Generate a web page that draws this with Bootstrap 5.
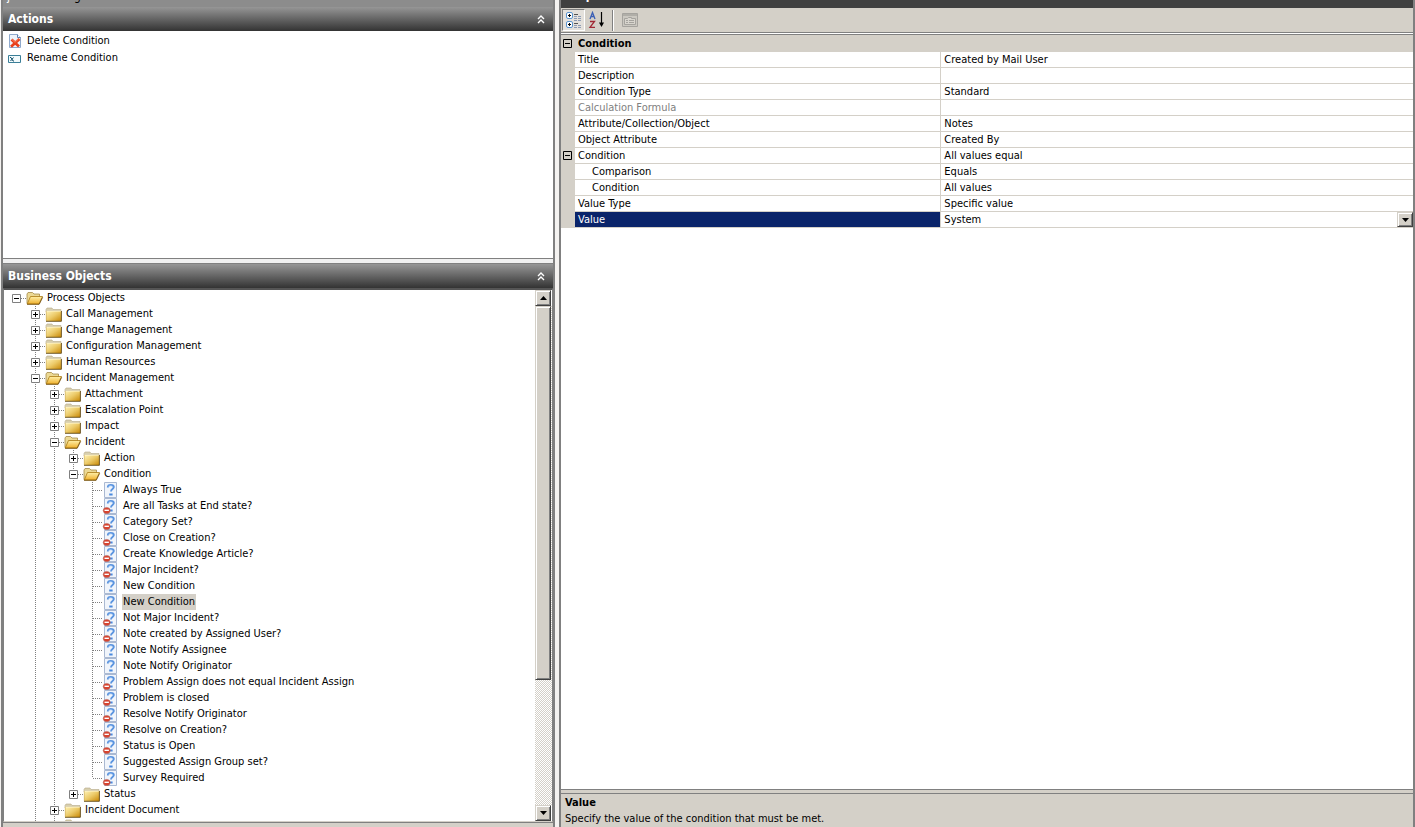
<!DOCTYPE html>
<html lang="en">
<head>
<meta charset="utf-8">
<meta name="viewport" content="width=device-width, initial-scale=1">
<title>Object Designer</title>
<link href="https://cdn.jsdelivr.net/npm/bootstrap@5.3.0/dist/css/bootstrap.min.css" rel="stylesheet">
<style>
  :root { --face: #d4d0c8; --edge: #808080; --dark: #404040; --navy: #0a246a; }
  body { font: 11px/16px "DejaVu Sans Condensed", "DejaVu Sans", sans-serif; color: #000; background: #f4f2f0; }
  button, input { font: inherit; color: inherit; }
  .workspace { display: grid; grid-template-columns: 555fr 4px 856fr; }
  .side { border-left: 2px solid var(--edge); border-right: 2px solid var(--edge); margin-left: 1px; }
  .side > * { flex-shrink: 0; }
  .strip { height: 7px; line-height: 7px; font-size: 12px; background: #8c8c8c; }
  .strip span { position: relative; top: -7px; }
  .pane-head { height: 24px; padding-left: 5px; font-size: 12px; line-height: 24px; font-weight: 700; color: #fff; background: linear-gradient(#969696, #333); }
  .pane-head h2 { font: inherit; }
  .flat { border: 0; background: none; padding: 0; line-height: 1; color: inherit; }
  .actions-list { height: 227px; padding-top: 1px; }
  .actions-list a { height: 17px; color: #000; text-decoration: none; }
  .splitter { height: 6px; background: #f0f0f0; border-top: 1px solid var(--edge); border-bottom: 1px solid var(--edge); }
  .splitter-wrap { margin: 0 -1px; }
  .tree-frame { min-height: 0; flex-shrink: 1; border: 1px solid var(--edge); border-top: 2px solid #555; border-bottom-color: var(--face); }
  .tree-row { height: 16px; padding-left: 3px; white-space: nowrap; }
  .guide { position: relative; width: 19px; height: 16px; flex: none; color: #808080; }
  .guide.v::before, .guide.end::before { content: ""; position: absolute; left: 9px; top: 0; width: 1px; height: 16px; background: repeating-linear-gradient(#808080 0 1px, transparent 1px 2px); }
  .guide.end::before { height: 8px; }
  .guide.h::after { content: ""; position: absolute; left: 10px; right: 0; top: 8px; height: 1px; background: repeating-linear-gradient(90deg, #808080 0 1px, transparent 1px 2px); }
  .toggle { position: absolute; z-index: 1; left: 5px; top: 4px; width: 9px; height: 9px; display: block; }
  .toggle svg, .gutter-toggle svg { display: block; }
  .node-icon { width: 18px; height: 16px; flex: none; margin-right: 2px; }
  .node-label { padding: 0 1px; color: #000; text-decoration: none; }
  .node-label.chosen { background: var(--face); }
  .scroll { width: 17px; }
  .bevel { border: 1px solid; border-color: var(--face) var(--dark) var(--dark) var(--face); box-shadow: inset 1px 1px #fff, inset -1px -1px var(--edge); background: var(--face); width: 16px; }
  .scroll-btn { height: 16px; padding: 0; display: flex; align-items: center; justify-content: center; flex: none; }
  .scroll-track { background: repeating-conic-gradient(#fff 0 25%, var(--face) 0 50%) 0 0 / 2px 2px; }
  .foot { height: 5px; background: var(--face); border-top: 1px solid var(--edge); }
  .props { border-left: 2px solid var(--edge); border-right: 2px solid var(--edge); background: var(--face); }
  .props-title { height: 8px; line-height: 8px; background: #404040; color: #fff; font-size: 12px; font-weight: 700; }
  .props-title span { position: relative; top: -9px; }
  .toolbar { height: 25px; padding-left: 1px; border-bottom: 1px solid var(--edge); }
  .tool { width: 23px; height: 22px; display: grid; place-items: center; }
  .tool.on { border: 1px solid; border-color: var(--edge) #fff #fff var(--edge); background: #e4e1dc; }
  .tool-sep { width: 2px; height: 21px; border-left: 1px solid var(--edge); border-right: 1px solid #fff; }
  .grid-area { background: #fff; border-top: 1px solid var(--edge); margin-top: 1px; outline: 1px solid #fff; }
  .prop-table { width: 100%; table-layout: fixed; border-collapse: separate; border-spacing: 0; border-top: 1px solid var(--face); }
  .prop-table th, .prop-table td { height: 16px; line-height: 15px; padding: 0 3px; font-weight: 400; border-bottom: 1px solid var(--face); white-space: nowrap; }
  .prop-table th { border-right: 1px solid var(--face); }
  .prop-table .gut { background: var(--face); padding: 0; }
  .prop-table .cat { background: var(--face); font-weight: 700; }
  .prop-table .sub { padding-left: 17px; }
  .prop-table .dim { color: #808080; }
  .prop-table .picked { background: var(--navy); color: #fff; }
  .prop-table .editing { padding-right: 0; }
  .gutter-toggle { display: block; margin-left: 2px; }
  .value-box { border: 0; padding: 0; height: 15px; outline: 0; min-width: 0; background: #fff; }
  .drop-btn { height: 15px; padding: 0; display: grid; place-items: center; flex: none; }
  .help-split { height: 5px; border-top: 1px solid var(--edge); border-bottom: 1px solid var(--edge); }
  .help-box { height: 33px; padding: 1px 4px; }
  .help-box h3 { font: inherit; font-weight: 700; }
</style>
</head>
<body class="vh-100 overflow-hidden">
<svg class="position-absolute" width="0" height="0" aria-hidden="true">
  <defs>
    <linearGradient id="gold" x1="0" y1="0" x2="1" y2="1"><stop offset="0" stop-color="#fff3b8"/><stop offset=".5" stop-color="#ecca68"/><stop offset="1" stop-color="#c98a08"/></linearGradient>
    <linearGradient id="flap" x1="0" y1="0" x2="0" y2="1"><stop offset="0" stop-color="#fff0a8"/><stop offset="1" stop-color="#efb02c"/></linearGradient>
  </defs>
  <symbol id="closed" viewBox="0 0 18 16">
    <path d="M1 3.500 2 2h5l1 1.500h8V6H1z" fill="#d8cfae" stroke="#b5aa88" stroke-width=".6"/>
    <path d="M1 5h15v10H1z" fill="url(#gold)"/><path d="M1 5.300h15" stroke="#fff6cc" stroke-width=".7"/>
    <path d="M1.300 5v9.700" stroke="#c9a858" stroke-width=".6"/><path d="M1 15.300h15.400V5" fill="none" stroke="#5e4308" stroke-width=".9"/>
  </symbol>
  <symbol id="opened" viewBox="0 0 18 16">
    <path d="M1 13.500V4l1-1.500h4.500L8 4h5.500v3" fill="#ecd994" stroke="#a58a4a" stroke-width=".8"/>
    <path d="M4.500 6.500h12l-3.500 7.500H1.200z" fill="url(#flap)" stroke="#a97812" stroke-width=".8"/>
    <path d="M1 14.300h12.200l3.500-7" fill="none" stroke="#6d4a08" stroke-width=".8"/>
  </symbol>
  <symbol id="query" viewBox="0 0 18 16">
    <path d="M2.500.5h12v15h-12z" fill="#f1f5fb" stroke="#aab9d2"/>
    <path d="M5.800 5.400Q5.800 3 8.800 3q3 0 3 2.100c0 2-2.800 1.800-2.800 4.400" fill="none" stroke="#5b95e0" stroke-width="1.900"/>
    <path d="M6.600 4.700q1-1.200 3-.9" fill="none" stroke="#b4d2f8" stroke-width=".8"/><path d="M7.200 11.500h3.400v2H7.200z" fill="#4a8ade"/>
  </symbol>
  <symbol id="block" viewBox="0 0 18 16">
    <use href="#query"/><ellipse cx="4.700" cy="12.500" rx="3.500" ry="3.100" fill="#d8422e" stroke="#b86a60" stroke-width=".6"/><path d="M2.500 12.300h4.400" stroke="#fff" stroke-width="1.400"/>
  </symbol>
  <symbol id="plus" viewBox="0 0 9 9"><path d="M.5.500h8v8h-8z" fill="#fff" stroke="#808080"/><path d="M2 4.500h5M4.500 2v5" stroke="#000"/></symbol>
  <symbol id="minus" viewBox="0 0 9 9"><path d="M.5.500h8v8h-8z" fill="#fff" stroke="#808080"/><path d="M2 4.500h5" stroke="#000"/></symbol>
  <symbol id="chev" viewBox="0 0 8 9"><path d="M1 4l3-3 3 3M1 8l3-3 3 3" fill="none" stroke="#fff" stroke-width="1.400"/></symbol>
</svg>

<main class="workspace h-100">
  <section class="side d-flex flex-column bg-white h-100 overflow-hidden">
    <div class="strip overflow-hidden"><span class="text-white ps-1">j</span><span class="ms-5 ps-3">g</span></div>
    <header class="pane-head d-flex align-items-center justify-content-between"><h2 class="m-0">Actions</h2><button class="flat me-2" aria-label="Collapse Actions"><svg width="8" height="9"><use href="#chev"/></svg></button></header>
    <nav class="actions-list">
      <a href="#" class="d-flex align-items-center ps-1 gap-1"><svg width="16" height="16" viewBox="0 0 16 16"><path d="M2.500 1.500h8l3 3v10h-11z" fill="#eef4fb" stroke="#8fa9cc"/><path d="M10.500 1.500v3h3" fill="#fff" stroke="#5f7fae"/><path d="m4.500 6.500 7.500 7M12.500 6l-8.500 7.800" stroke="#e8401c" stroke-width="2.800"/><path d="m5 6.500 3 2.800L11.500 6" fill="none" stroke="#ff9474" stroke-width=".8"/></svg><span>Delete Condition</span></a>
      <a href="#" class="d-flex align-items-center ps-1 gap-1"><svg width="16" height="16" viewBox="0 0 16 16"><path d="M1.500 5.500h12v7h-12z" fill="#f2fafc" stroke="#3b7f98"/><path d="M3 7.500h1l2 3.500h1M6.500 7.500 3.500 11" fill="none" stroke="#14506b"/></svg><span>Rename Condition</span></a>
    </nav>
    <div class="splitter-wrap"><div class="splitter"></div></div>
    <header class="pane-head d-flex align-items-center justify-content-between"><h2 class="m-0">Business Objects</h2><button class="flat me-2" aria-label="Collapse Business Objects"><svg width="8" height="9"><use href="#chev"/></svg></button></header>
    <div class="tree-frame d-flex flex-fill overflow-hidden">
      <div class="flex-fill overflow-hidden" id="tree" role="tree" aria-label="Business Objects"></div>
      <div class="scroll d-flex flex-column flex-shrink-0">
        <button class="bevel scroll-btn" aria-label="Scroll up"><svg width="7" height="4"><path d="M0 4h7L3.500 0z"/></svg></button>
        <div class="scroll-track flex-fill d-flex flex-column"><div class="bevel h-75"></div></div>
        <button class="bevel scroll-btn" aria-label="Scroll down"><svg width="7" height="4"><path d="M0 0h7L3.500 4z"/></svg></button>
      </div>
    </div>
    <div class="foot"></div>
  </section>
  <div></div>
  <section class="props d-flex flex-column h-100 overflow-hidden">
    <div class="props-title overflow-hidden ps-1 flex-shrink-0"><span>Properties</span></div>
    <div class="toolbar d-flex align-items-center flex-shrink-0">
      <button class="flat tool on" aria-label="Categorized"><svg width="18" height="18" viewBox="0 0 18 18"><g fill="#fff" stroke="#5b95cf"><rect x="1.500" y="1.500" width="6" height="6" rx="1.500"/><rect x="1.500" y="10.500" width="6" height="6" rx="1.500"/></g><path d="M3 4.500h3M4.500 3v3M3 13.500h3M4.500 12v3" stroke="#000"/><path d="M9 3.500h4M9 12.500h4" stroke="#555"/><path d="M9 5.500h3m1 0h3M9 7.500h3m1 0h3M9 9.500h3m1 0h3M9 14.500h3m1 0h3M9 16.500h3m1 0h3" stroke="#8d9cb5"/></svg></button>
      <button class="flat tool" aria-label="Alphabetical"><svg width="18" height="18" viewBox="0 0 18 18"><path d="m2 8 2.500-6.500L7 8M3 5.500h3" fill="none" stroke="#3b5fb5" stroke-width="1.300"/><path d="M2 10.500h4.500L2 16.300h5" fill="none" stroke="#a02834" stroke-width="1.300"/><path d="M13.500 1v13" stroke="#000" stroke-width="1.200"/><path d="M11 11.500h5L13.500 16z"/></svg></button>
      <span class="tool-sep mx-1"></span>
      <button class="flat tool" disabled aria-label="Property Pages"><svg width="18" height="18" viewBox="0 0 18 18"><path d="M1.500 2.500h15v13h-15z" fill="#cbc8c1" stroke="#a5a39e"/><path d="M2 4h14" stroke="#b0aea8" stroke-width="2"/><path d="M3.500 13.500v-6h3l1-1h3v1h4v6z" fill="#d8d5ce" stroke="#a5a39e"/><path d="M5 9.500h2m1 0h5M5 11.500h2m1 0h5" stroke="#a5a39e"/></svg></button>
    </div>
    <div class="grid-area flex-fill">
      <table class="prop-table">
        <colgroup><col style="width:14px"><col style="width:43%"><col></colgroup>
        <tbody id="props"></tbody>
      </table>
    </div>
    <div class="help-split flex-shrink-0"></div>
    <div class="help-box flex-shrink-0"><h3 class="m-0">Value</h3><p class="m-0">Specify the value of the condition that must be met.</p></div>
  </section>
</main>

<script>
// Tree rows: [level, kind, label, flag]; + closed folder, - open folder, q condition, b blocked condition
const rows = [
  [0,'-','Process Objects'],[1,'+','Call Management'],[1,'+','Change Management'],[1,'+','Configuration Management'],[1,'+','Human Resources'],
  [1,'-','Incident Management'],[2,'+','Attachment'],[2,'+','Escalation Point'],[2,'+','Impact'],[2,'-','Incident'],[3,'+','Action'],[3,'-','Condition'],
  [4,'q','Always True'],[4,'b','Are all Tasks at End state?'],[4,'b','Category Set?'],[4,'b','Close on Creation?'],[4,'b','Create Knowledge Article?'],
  [4,'b','Major Incident?'],[4,'q','New Condition'],[4,'q','New Condition','chosen'],[4,'b','Not Major Incident?'],[4,'b','Note created by Assigned User?'],
  [4,'q','Note Notify Assignee'],[4,'q','Note Notify Originator'],[4,'b','Problem Assign does not equal Incident Assign'],[4,'b','Problem is closed'],
  [4,'b','Resolve Notify Originator'],[4,'b','Resolve on Creation?'],[4,'b','Status is Open'],[4,'q','Suggested Assign Group set?'],[4,'b','Survey Required','last'],
  [3,'+','Status','last'],[2,'+','Incident Document'],[2,'+','Service']
];
const icons = { '+':'closed', '-':'opened', q:'query', b:'block' };
document.getElementById('tree').innerHTML = rows.map(([level, kind, label, flag]) => {
  let cells = '';
  for (let i = 0; i < level; i++) cells += `<span class="guide ${i ? 'v' : ''}"></span>`;
  const folder = kind === '+' || kind === '-';
  const line = level === 0 ? '' : flag === 'last' ? 'end' : 'v';
  const box = folder ? `<button class="flat toggle" aria-label="Toggle ${label}"><svg width="9" height="9"><use href="#${kind === '+' ? 'plus' : 'minus'}"/></svg></button>` : '';
  return `<div class="tree-row d-flex" role="treeitem" aria-level="${level + 1}">${cells}<span class="guide h ${line}">${box}</span><svg class="node-icon"><use href="#${icons[kind]}"/></svg><a href="#" class="node-label ${flag === 'chosen' ? 'chosen' : ''}">${label}</a></div>`;
}).join('');

const minus = '<button class="flat gutter-toggle" aria-label="Collapse"><svg width="9" height="9" viewBox="0 0 9 9"><path d="M.5.500h8v8h-8z" fill="none" stroke="#000"/><path d="M2 4.500h5" stroke="#000"/></svg></button>';
const props = [
  ['Title','Created by Mail User'],['Description',''],['Condition Type','Standard'],['Calculation Formula','','dim'],['Attribute/Collection/Object','Notes'],
  ['Object Attribute','Created By'],['Condition','All values equal','open'],['Comparison','Equals','sub'],['Condition','All values','sub'],['Value Type','Specific value']
];
document.getElementById('props').innerHTML =
  `<tr><td class="gut">${minus}</td><th class="cat" colspan="2" scope="colgroup">Condition</th></tr>` +
  props.map(([n, v, c]) => `<tr><td class="gut">${c === 'open' ? minus : ''}</td><th scope="row" class="${c || ''}">${n}</th><td>${v}</td></tr>`).join('') +
  `<tr><td class="gut"></td><th scope="row" class="picked"><label for="val" class="d-block">Value</label></th><td class="editing"><div class="d-flex"><input id="val" class="value-box flex-fill" type="text" value="System"><button class="bevel drop-btn" aria-label="Show values"><svg width="7" height="4"><path d="M0 0h7L3.500 4z"/></svg></button></div></td></tr>`;
</script>
<script src="https://cdn.jsdelivr.net/npm/bootstrap@5.3.0/dist/js/bootstrap.bundle.min.js"></script>
</body>
</html>
